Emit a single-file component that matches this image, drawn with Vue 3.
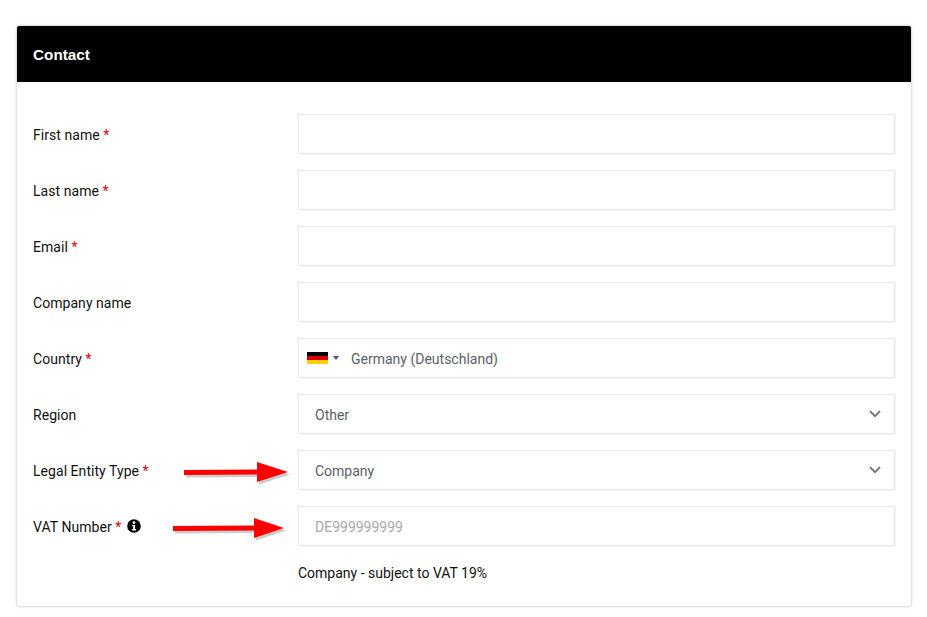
<script setup>
const arrowPath = (head, tip) =>
  `M1 10L${head} 9.5V2L${tip} 12L${head} 22V14.5L1 15z`;

const fields = [
  { label: "First name", required: true },
  { label: "Last name", required: true },
  { label: "Email", required: true },
  { label: "Company name" },
  { label: "Country", required: true, type: "country", value: "Germany (Deutschland)" },
  { label: "Region", type: "select", value: "Other" },
  { label: "Legal Entity Type", required: true, type: "select", value: "Company", arrow: "legal", path: arrowPath(74, 105) },
  { label: "VAT Number", required: true, info: true, placeholder: "DE999999999", arrow: "vat", path: arrowPath(82, 112) },
];
</script>

<template>
  <div class="page">
    <section class="card">
      <header class="card-head">Contact</header>
      <form class="card-body" @submit.prevent>
        <div v-for="f in fields" :key="f.label" class="row">
          <label class="label">
            {{ f.label }}<span v-if="f.required" class="req"> *</span>
            <svg v-if="f.info" class="info" viewBox="0 0 14 14" width="14" height="14">
              <circle cx="7" cy="7" r="6.8" fill="#000" />
              <circle cx="7" cy="3.6" r="1.35" fill="#fff" />
              <path d="M5.2 6h2.9v4.1h1v1.3H5.2v-1.3h1V7.3h-1z" fill="#fff" />
            </svg>
          </label>

          <div class="control" :class="{ 'is-country': f.type === 'country' }">
            <template v-if="f.type === 'country'">
              <span class="flag"><i class="black"></i><i class="red"></i><i class="gold"></i></span>
              <span class="caret"></span>
              <span class="value">{{ f.value }}</span>
            </template>
            <template v-else-if="f.type === 'select'">
              <span class="value">{{ f.value }}</span>
              <svg class="chevron" viewBox="0 0 12 8" width="12" height="8">
                <path d="M1 1.2l5 5 5-5" fill="none" stroke="#6f6f6f" stroke-width="1.7" />
              </svg>
            </template>
            <input v-else class="input" type="text" :placeholder="f.placeholder" />
          </div>

          <svg v-if="f.arrow" class="arrow" :class="f.arrow" viewBox="0 0 116 28" width="116" height="28">
            <path :d="f.path" fill="#000" opacity="0.2" transform="translate(2 2.5)" />
            <path :d="f.path" fill="#f00" />
          </svg>
        </div>
        <p class="note">Company - subject to VAT 19%</p>
      </form>
    </section>
  </div>
</template>

<style scoped>
.page {
  width: 927px;
  height: 617px;
  padding: 26px 16px 0 17px;
  box-sizing: border-box;
  font-family: Roboto, "Liberation Sans", Arial, sans-serif;
}

.card {
  width: 894px;
  height: 580px;
  background: #fff;
  border-radius: 2px;
  box-shadow: 0 0 3px rgba(0, 0, 0, 0.32);
  overflow: hidden;
}

.card-head {
  height: 56px;
  box-sizing: border-box;
  padding: 2px 0 0 16px;
  display: flex;
  align-items: center;
  background: #000;
  color: #fff;
  font-family: "Liberation Sans", Arial, sans-serif;
  font-weight: 700;
  font-size: 15.3px;
}

.card-body {
  padding: 32px 16px 0;
  display: flex;
  flex-direction: column;
  gap: 16px;
}

.row {
  position: relative;
  display: grid;
  grid-template-columns: 265px 597px;
  align-items: center;
  height: 40px;
}

.label {
  font-size: 14px;
  letter-spacing: 0.05px;
  color: #111;
  display: flex;
  align-items: center;
  white-space: pre;
  padding-top: 2px;
}

.req {
  color: #e00000;
}

.info {
  margin-left: 6px;
  margin-top: -2px;
}

.control {
  height: 40px;
  box-sizing: border-box;
  border: 1px solid #e8e8e8;
  box-shadow: 1px 1px 0 #f3f3f3;
  display: flex;
  align-items: center;
  justify-content: space-between;
  padding: 2px 13px 0 16px;
  font-size: 14px;
  color: #5c5f66;
}

.control.is-country {
  justify-content: flex-start;
  padding-left: 8px;
}

.flag {
  width: 21px;
  height: 13px;
  margin-top: -2px;
  display: flex;
  flex-direction: column;
}

.flag i {
  flex: 1;
}

.black {
  background: #000;
}

.red {
  background: #dd0000;
}

.gold {
  background: #ffce00;
}

.caret {
  width: 0;
  height: 0;
  margin: -2px 12px 0 5px;
  border-left: 3px solid transparent;
  border-right: 3px solid transparent;
  border-top: 4px solid #555;
}

.chevron {
  margin-top: -2px;
}

.input {
  width: 100%;
  border: 0;
  outline: 0;
  padding: 0;
  background: transparent;
  font-family: inherit;
  font-size: 14px;
  color: #5c5f66;
}

.input::placeholder {
  color: #a8a8a8;
  opacity: 1;
}

/* annotation arrows sit on top of the form */
.arrow {
  position: absolute;
  top: 10px;
}

.arrow.legal {
  left: 150px;
}

.arrow.vat {
  left: 139px;
}

.note {
  margin: 0;
  padding: 3px 0 0 265px;
  font-size: 14px;
  color: #111;
}
</style>
